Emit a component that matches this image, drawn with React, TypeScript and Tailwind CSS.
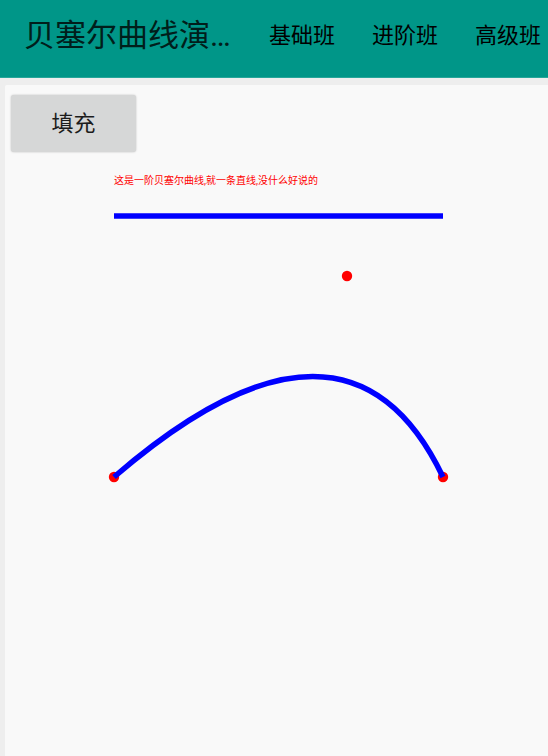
interface Point {
  x: number
  y: number
}

// --- Curve data ---

const MENU_ITEMS = [
  { id: 'basic', label: '基础班' },
  { id: 'advanced', label: '进阶班' },
  { id: 'expert', label: '高级班' },
]

const START: Point = { x: 109, y: 277 }
const CONTROL: Point = { x: 342, y: 76 }
const END: Point = { x: 438, y: 277 }

function Toolbar() {
  return (
    <header className="flex h-[78px] items-center border-b border-[#26a69a] bg-[#009688] pb-1.5 pl-6">
      <h1 className="min-w-0 flex-1 whitespace-nowrap text-[31px] leading-9 text-[#001e1b]">贝塞尔曲线演…</h1>
      <nav className="flex shrink-0 gap-[37px] pr-[7px]">
        {MENU_ITEMS.map((item) => (
          <button key={item.id} type="button" className="text-[22px] leading-8 text-black">
            {item.label}
          </button>
        ))}
      </nav>
    </header>
  )
}

function BezierCanvas() {
  return (
    <svg className="mt-[11px] block h-[300px] w-full" aria-label="贝塞尔曲线">
      {/* First order: a straight line */}
      <line x1={START.x} y1="16" x2={END.x} y2="16" stroke="#0000ff" strokeWidth="5.5" />

      {/* Second order: end points, control point, curve */}
      {[START, CONTROL, END].map((p) => (
        <circle key={`${p.x}-${p.y}`} cx={p.x} cy={p.y} r="5.2" fill="#ff0000" />
      ))}
      <path
        d={`M${START.x} ${START.y} Q${CONTROL.x} ${CONTROL.y} ${END.x} ${END.y}`}
        fill="none"
        stroke="#0000ff"
        strokeWidth="5.5"
      />
    </svg>
  )
}

export default function App() {
  return (
    <div className="flex min-h-screen flex-col bg-[#eeeeee] font-[Roboto,'Noto_Sans_CJK_SC',sans-serif]">
      <Toolbar />
      <main className="mt-[7px] ml-[5px] flex-1 rounded-tl-xs bg-[#f9f9f9] pt-[10px]">
        <button
          type="button"
          className="ml-[6px] block h-[57px] w-[125px] rounded-[3px] bg-[#d6d7d7] text-[22px] leading-8 text-[#1c1c1c] shadow-[0_0_2px_#bbbbbb]"
        >
          填充
        </button>
        <p className="mt-[21px] ml-[109px] text-[10px] leading-4 text-[#ff0000]">
          这是一阶贝塞尔曲线,就一条直线,没什么好说的
        </p>
        <BezierCanvas />
      </main>
    </div>
  )
}
